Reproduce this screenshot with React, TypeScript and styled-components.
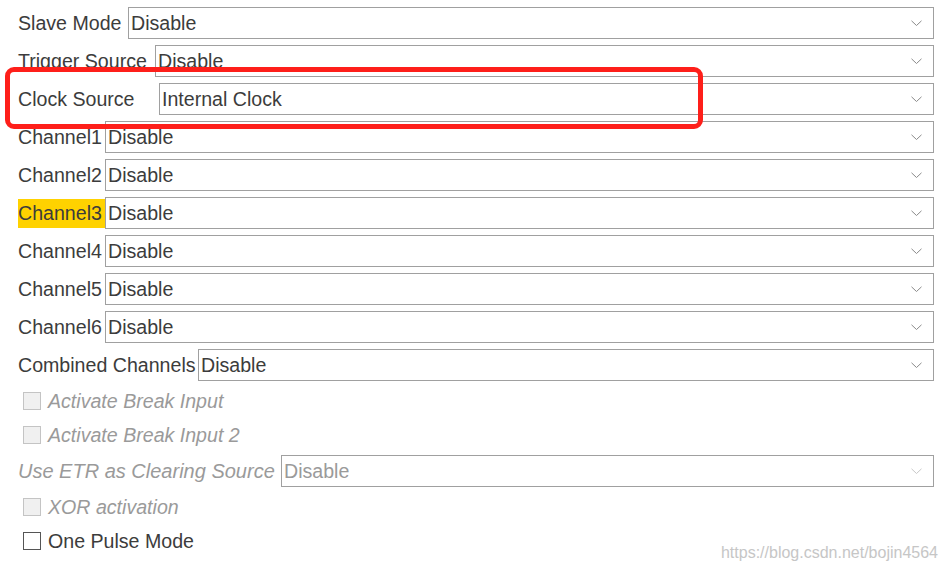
import React from 'react'
import styled, {createGlobalStyle, css} from 'styled-components'

const GlobalStyle = createGlobalStyle`
    html, body {
        margin: 0;
        padding: 0;
        background: #ffffff;
    }
    body {
        font-family: "Liberation Sans", Arial, sans-serif;
    }
`

type SelectRowData = {
    label: string
    value: string
    labelWidth: number
    highlight?: boolean
}

const selectRows: SelectRowData[] = [
    {label: 'Slave Mode', value: 'Disable', labelWidth: 110},
    {label: 'Trigger Source', value: 'Disable', labelWidth: 137},
    {label: 'Clock Source', value: 'Internal Clock', labelWidth: 141},
    {label: 'Channel1', value: 'Disable', labelWidth: 87},
    {label: 'Channel2', value: 'Disable', labelWidth: 87},
    {label: 'Channel3', value: 'Disable', labelWidth: 87, highlight: true},
    {label: 'Channel4', value: 'Disable', labelWidth: 87},
    {label: 'Channel5', value: 'Disable', labelWidth: 87},
    {label: 'Channel6', value: 'Disable', labelWidth: 87},
    {label: 'Combined Channels', value: 'Disable', labelWidth: 180},
]

const Chevron = ({disabled}: {disabled?: boolean}) => (
    <svg width="11" height="7" viewBox="0 0 11 7">
        <polyline
            points="0.5,0.8 5.5,5.5 10.5,0.8"
            fill="none"
            stroke={disabled ? '#c8c8c8' : '#8a8a8a'}
            strokeWidth="1"
        />
    </svg>
)

const SelectBox = ({value, disabled}: {value: string, disabled?: boolean}) => (
    <Select $disabled={disabled}>
        <span>{value}</span>
        <Chevron disabled={disabled}/>
    </Select>
)

const CheckRow = ({label, disabled}: {label: string, disabled?: boolean}) => (
    <CheckLine>
        <Box $disabled={disabled}/>
        <CheckLabel $disabled={disabled}>{label}</CheckLabel>
    </CheckLine>
)

export default function App() {
    return (
        <>
            <GlobalStyle/>
            <Panel>
                {selectRows.map(row => (
                    <Row key={row.label} $labelWidth={row.labelWidth}>
                        <Label $highlight={row.highlight}>{row.label}</Label>
                        <SelectBox value={row.value}/>
                    </Row>
                ))}
                <CheckRow label="Activate Break Input" disabled/>
                <CheckRow label="Activate Break Input 2" disabled/>
                <Row $labelWidth={263}>
                    <Label $disabled>Use ETR as Clearing Source</Label>
                    <SelectBox value="Disable" disabled/>
                </Row>
                <CheckRow label="XOR activation" disabled/>
                <CheckRow label="One Pulse Mode"/>

                <Marker/>
                <Watermark>https://blog.csdn.net/bojin4564</Watermark>
            </Panel>
        </>
    )
}

const Panel = styled.div`
    position: relative;
    width: 949px;
    height: 574px;
    box-sizing: border-box;
    padding: 7px 15px 0 18px;
    display: flex;
    flex-direction: column;
    gap: 6px;
    overflow: hidden;
    font-size: 19.6px;
    color: #3c3c3c;
`

const Row = styled.div<{$labelWidth: number}>`
    display: grid;
    grid-template-columns: ${p => p.$labelWidth}px 1fr;
    align-items: center;
    height: 32px;
`

const Label = styled.span<{$highlight?: boolean, $disabled?: boolean}>`
    display: flex;
    align-items: center;
    height: 29px;
    white-space: nowrap;
    ${p => p.$highlight && css`
        background: #ffd200;
    `}
    ${p => p.$disabled && css`
        color: #9a9a9a;
        font-style: italic;
        font-size: 20px;
    `}
`

const Select = styled.div<{$disabled?: boolean}>`
    height: 32px;
    box-sizing: border-box;
    border: 1px solid #a0a0a0;
    background: #ffffff;
    display: flex;
    align-items: center;
    justify-content: space-between;
    padding: 0 11px 0 2px;
    color: ${p => p.$disabled ? '#9a9a9a' : '#3c3c3c'};

    svg {
        flex: none;
    }
`

const CheckLine = styled.div`
    display: flex;
    align-items: center;
    gap: 7px;
    height: 28px;
    padding-left: 5px;
`

const Box = styled.span<{$disabled?: boolean}>`
    width: 18px;
    height: 18px;
    box-sizing: border-box;
    border: 1px solid ${p => p.$disabled ? '#c4c4c4' : '#555555'};
    background: ${p => p.$disabled ? '#f0f0f0' : '#ffffff'};
`

const CheckLabel = styled.span<{$disabled?: boolean}>`
    color: ${p => p.$disabled ? '#9a9a9a' : '#3c3c3c'};
    font-style: ${p => p.$disabled ? 'italic' : 'normal'};
`

const Marker = styled.div`
    position: absolute;
    left: 5px;
    top: 67px;
    width: 698px;
    height: 62px;
    box-sizing: border-box;
    border: 5px solid #fe1f1a;
    border-radius: 9px;
    pointer-events: none;
`

const Watermark = styled.div`
    position: absolute;
    right: 11px;
    top: 544px;
    font-size: 16px;
    color: #c6c6c6;
    text-shadow: 0 0 1px #ffffff;
`
